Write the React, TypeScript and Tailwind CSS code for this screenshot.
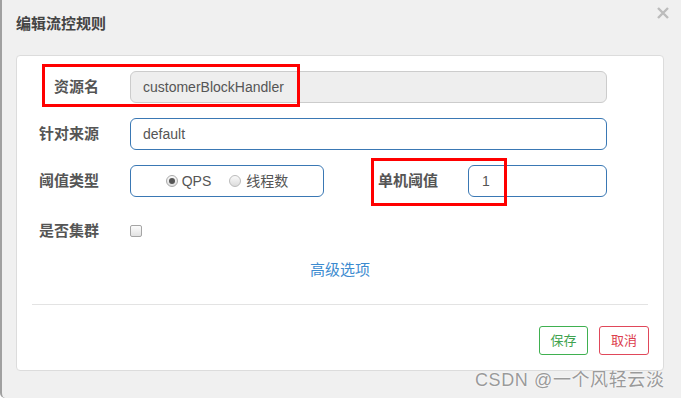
import React from "react";

const cjk = { fontFamily: '"Liberation Sans", "Noto Sans CJK SC", sans-serif' };

export default function App() {
  return (
    <div
      className="relative w-[681px] h-[398px] bg-[#f0f0f0] border-l-2 border-[#a0a0a0] rounded-bl-[5px] overflow-hidden"
      style={cjk}
    >
      {/* header */}
      <div className="h-[55px] pl-[14px] pt-[14px] flex items-start justify-between">
        <div className="text-[15px] leading-[20px] font-bold text-[#444]">编辑流控规则</div>
        <svg width="12" height="12" viewBox="0 0 12 12" className="mr-[12px] mt-[-7px]">
          <path d="M1 1 L11 11 M11 1 L1 11" stroke="#bcbcbc" strokeWidth="2.4" />
        </svg>
      </div>

      {/* panel */}
      <div className="ml-[14px] w-[648px] h-[316px] bg-white border border-[#dcdcdc] rounded-[4px] flex flex-col pt-[15px]">
        {/* row 1 */}
        <div className="flex items-center h-[32px]">
          <div className="w-[82px] text-right text-[15px] font-bold text-[#555]">资源名</div>
          <div className="ml-[31px] w-[477px] h-[32px] bg-[#eeeeee] border border-[#cccccc] rounded-[6px] flex items-center pl-[12px] text-[14px] text-[#555]">
            customerBlockHandler
          </div>
        </div>
        {/* row 2 */}
        <div className="flex items-center h-[32px] mt-[15px]">
          <div className="w-[82px] text-right text-[15px] font-bold text-[#555]">针对来源</div>
          <div className="ml-[31px] w-[477px] h-[32px] bg-white border border-[#3a78b4] rounded-[6px] flex items-center pl-[12px] text-[14px] text-[#555]">
            default
          </div>
        </div>
        {/* row 3 */}
        <div className="flex items-center h-[32px] mt-[15px]">
          <div className="w-[82px] text-right text-[15px] font-bold text-[#555]">阈值类型</div>
          <div className="ml-[31px] w-[194px] h-[32px] bg-white border border-[#3a78b4] rounded-[6px] flex items-center justify-center text-[14px] text-[#555]">
            <span className="w-[12px] h-[12px] rounded-full border border-[#aaa] bg-gradient-to-b from-[#fafafa] to-[#dedede] flex items-center justify-center">
              <span className="w-[6px] h-[6px] rounded-full bg-[#555]" />
            </span>
            <span className="ml-[4px]">QPS</span>
            <span className="ml-[18px] w-[12px] h-[12px] rounded-full border border-[#bbb] bg-gradient-to-b from-[#fafafa] to-[#dcdcdc]" />
            <span className="ml-[5px]">线程数</span>
          </div>
          <div className="w-[114px] text-right text-[15px] font-bold text-[#555]">单机阈值</div>
          <div className="ml-[30px] w-[139px] h-[32px] bg-white border border-[#3a78b4] rounded-[6px] flex items-center pl-[13px] text-[14px] text-[#555]">
            1
          </div>
        </div>
        {/* row 4 */}
        <div className="flex items-center h-[32px] mt-[18px]">
          <div className="w-[82px] text-right text-[15px] font-bold text-[#555]">是否集群</div>
          <div className="ml-[31px] w-[12px] h-[12px] rounded-[2px] border border-[#a5a5a5] bg-gradient-to-b from-[#fcfcfc] to-[#e2e2e2]" />
        </div>
        {/* advanced */}
        <div className="mt-[12px] h-[22px] flex items-center justify-center text-[15px] text-[#3c8bd0]">
          高级选项
        </div>
        {/* divider */}
        <div className="mx-[15px] mt-[23px] h-px bg-[#e3e3e3]" />
        {/* buttons */}
        <div className="flex justify-end gap-[11px] mr-[14px] mt-[21px]">
          <div className="w-[49px] h-[29px] border border-[#3fb050] rounded-[3px] flex items-center justify-center text-[13px] text-[#3fa34f]">
            保存
          </div>
          <div className="w-[50px] h-[29px] border border-[#e0485a] rounded-[3px] flex items-center justify-center text-[13px] text-[#dc3e4e]">
            取消
          </div>
        </div>
      </div>

      {/* annotations */}
      <div className="absolute left-[40px] top-[64px] w-[258px] h-[43px] border-[3px] border-[#ff0000]" />
      <div className="absolute left-[369px] top-[158px] w-[136px] h-[48px] border-[3px] border-[#ff0000]" />

      {/* watermark */}
      <div
        className="absolute left-[473px] top-[368px] text-[18px] tracking-[0.6px] leading-[24px] text-[#9a9a9a] whitespace-nowrap"
        style={{ textShadow: "0 0 2px #ffffff, 0 0 1px #ffffff" }}
      >
        CSDN @一个风轻云淡
      </div>
    </div>
  );
}
